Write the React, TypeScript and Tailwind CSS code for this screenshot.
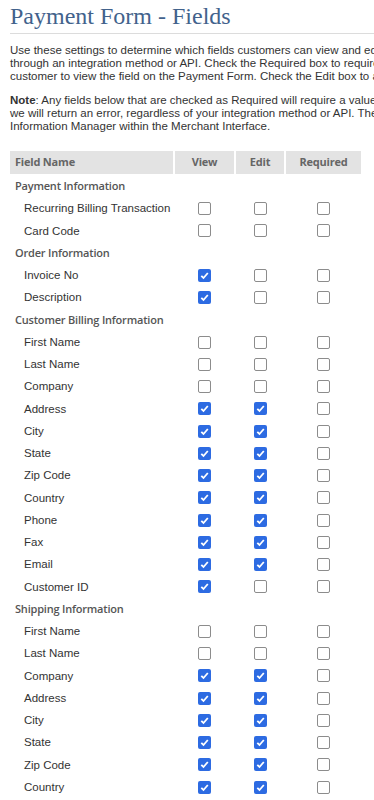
import React from "react";

type Row =
	| { section: string }
	| { label: string; view: boolean; edit: boolean; required: boolean };

const f = (label: string, view = false, edit = false, required = false): Row => ({
	label,
	view,
	edit,
	required,
});

const ROWS: Row[] = [
	{ section: "Payment Information" },
	f("Recurring Billing Transaction"),
	f("Card Code"),
	{ section: "Order Information" },
	f("Invoice No", true),
	f("Description", true),
	{ section: "Customer Billing Information" },
	f("First Name"),
	f("Last Name"),
	f("Company"),
	f("Address", true, true),
	f("City", true, true),
	f("State", true, true),
	f("Zip Code", true, true),
	f("Country", true, true),
	f("Phone", true, true),
	f("Fax", true, true),
	f("Email", true, true),
	f("Customer ID", true),
	{ section: "Shipping Information" },
	f("First Name"),
	f("Last Name"),
	f("Company", true, true),
	f("Address", true, true),
	f("City", true, true),
	f("State", true, true),
	f("Zip Code", true, true),
	f("Country", true, true),
];

const Check = ({ initial }: { initial: boolean }) => {
	const [on, setOn] = React.useState(initial);
	return (
		<button
			type="button"
			role="checkbox"
			aria-checked={on}
			onClick={() => setOn((v) => !v)}
			className={`inline-flex w-[13px] h-[13px] rounded-[2px] align-middle items-center justify-center ${
				on ? "bg-[#2d6be2]" : "bg-white border border-[#8c8c8c]"
			}`}
		>
			{on && (
				<svg width="11" height="11" viewBox="0 0 11 11">
					<path d="M2.3 5.8 L4.5 8 L8.8 3" fill="none" stroke="white" strokeWidth="1.8" />
				</svg>
			)}
		</button>
	);
};

export default function App() {
	return (
		<div className="w-[374px] overflow-hidden bg-white pl-[10px] pt-[2px] font-['Liberation_Sans',Arial,sans-serif] text-[#333]">
			<h1 className="font-['Liberation_Serif',Georgia,serif] text-[24px] leading-[28px] text-[#42628c]">
				Payment Form - Fields
			</h1>
			<div className="mt-[3px] h-px w-[600px] bg-[#dcdcdc]" />

			<div className="mt-[10px] text-[11.5px] leading-[13px] whitespace-nowrap">
				<p>
					Use these settings to determine which fields customers can view and edit when submitting transactions
					<br />
					through an integration method or API. Check the Required box to require a value. Check the View box to allow the
					<br />
					customer to view the field on the Payment Form. Check the Edit box to allow the customer to edit the field.
				</p>
				<p className="mt-[11px]">
					<b>Note</b>: Any fields below that are checked as Required will require a value for every transaction. If a value is not submitted,
					<br />
					we will return an error, regardless of your integration method or API. These settings can be changed in the Payment Form
					<br />
					Information Manager within the Merchant Interface.
				</p>
			</div>

			<table className="mt-[16px] -ml-[2px] table-fixed w-[355px] border-separate border-spacing-[2px] text-[11.5px]">
				<thead>
					<tr className="h-[23px] font-['Open_Sans',sans-serif] text-[11px] tracking-[-0.2px] text-[#666] bg-[#e3e3e3]">
						<th className="w-[163px] pl-[5px] text-left font-bold">Field Name</th>
						<th className="w-[59px] font-bold">View</th>
						<th className="w-[48px] font-bold">Edit</th>
						<th className="w-[75px] font-bold">Required</th>
					</tr>
				</thead>
				<tbody>
					{ROWS.map((r, i) =>
						"section" in r ? (
							<tr key={i} className="h-[20.26px]">
								<td
									colSpan={4}
									className="pl-[5px] p-0 whitespace-nowrap font-['Open_Sans',sans-serif] text-[11px] tracking-[-0.2px] font-semibold text-[#555] leading-[16px]"
								>
									{r.section}
								</td>
							</tr>
						) : (
							<tr key={i} className="h-[20.26px]">
								<td className="pl-[14px] p-0 whitespace-nowrap leading-[14px]">{r.label}</td>
								<td className="p-0 text-center">
									<Check initial={r.view} />
								</td>
								<td className="p-0 text-center">
									<Check initial={r.edit} />
								</td>
								<td className="p-0 text-center">
									<Check initial={r.required} />
								</td>
							</tr>
						)
					)}
				</tbody>
			</table>
		</div>
	);
}
